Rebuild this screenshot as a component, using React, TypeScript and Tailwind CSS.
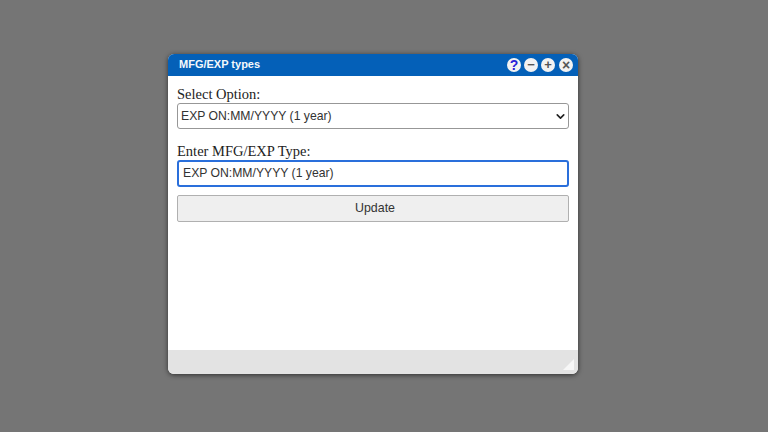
import { ChevronDown } from 'lucide-react'

const sans = "font-['Liberation_Sans',Arial,sans-serif]"
const serif = "font-['Liberation_Serif','Times_New_Roman',serif]"

const CircleButton = ({ label, className }: { label: string; className?: string }) => (
  <span
    className={`flex h-[14px] w-[14px] items-center justify-center rounded-full bg-[#f2f2f2] leading-none font-bold ${className}`}
  >
    {label}
  </span>
)

export default function App() {
  return (
    <div className="h-[432px] w-[768px] overflow-hidden bg-[#757575] pt-[54px] pl-[168px]">
      <div className="flex h-[320px] w-[410px] flex-col overflow-hidden rounded-[6px] bg-white shadow-[0_1px_5px_rgba(0,0,0,0.6)]">
        <div className="flex h-[22px] shrink-0 items-center justify-between bg-[#0460b8] pr-[5px] pb-[1px] pl-[11px]">
          <span className={`${sans} text-[11px] font-bold text-[#f4f8fc]`}>MFG/EXP types</span>
          <div className="flex items-center gap-[3px]">
            <CircleButton label="?" className={`${sans} text-[14px] text-[#2a22d8]`} />
            <CircleButton label="−" className={`${sans} text-[13px] text-[#555555]`} />
            <CircleButton label="+" className={`${sans} text-[13px] text-[#555555]`} />
            <CircleButton label="×" className={`${sans} ml-[1px] text-[14px] text-[#555555]`} />
          </div>
        </div>

        <div className="flex flex-1 flex-col px-[9px] pt-[9px]">
          <label className={`${serif} h-[18px] text-[14.5px] leading-[19px] text-[#222222]`}>
            Select Option:
          </label>
          <div
            className={`${sans} flex h-[26px] items-center justify-between rounded-[3px] border border-[#979797] pr-[1px] pl-[3px] text-[12.2px] text-[#333333]`}
          >
            <span>EXP ON:MM/YYYY (1 year)</span>
            <ChevronDown size={13} strokeWidth={3} className="text-[#222222]" />
          </div>

          <label className={`${serif} mt-[14px] h-[17px] text-[14.5px] leading-[17px] text-[#222222]`}>
            Enter MFG/EXP Type:
          </label>
          <div
            className={`${sans} flex h-[27px] items-center rounded-[3px] border-2 border-[#2a6fdb] pl-[4px] text-[12.2px] text-[#333333]`}
          >
            EXP ON:MM/YYYY (1 year)
          </div>

          <div
            className={`${sans} mt-[8px] flex h-[27px] items-center justify-center rounded-[2px] border border-[#b0b0b0] bg-[#efefef] pl-[4px] text-[12.4px] text-[#333333]`}
          >
            Update
          </div>
        </div>

        <div className="flex h-[24px] shrink-0 items-end justify-end bg-[#e3e3e3] pr-[4px] pb-[4px]">
          <svg width="11" height="11" viewBox="0 0 11 11">
            <path d="M11 0V11H0Z" fill="#f7f7f7" />
          </svg>
        </div>
      </div>
    </div>
  )
}
